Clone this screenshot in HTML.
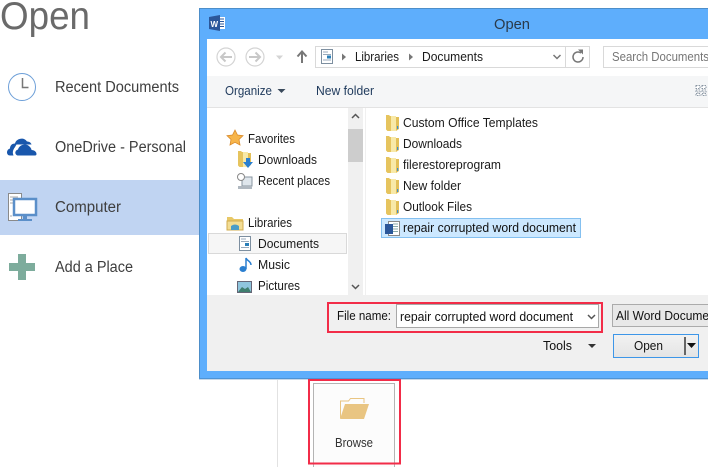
<!DOCTYPE html>
<html><head><meta charset="utf-8"><style>
html,body{margin:0;padding:0;background:#fff;width:708px;height:467px;overflow:hidden}
svg{display:block}
text{font-family:"Liberation Sans",sans-serif;font-size:12.5px;fill:#1a1a1a}
.m{font-size:15.500px;fill:#3e3e3e}
</style></head><body>
<svg width="708" height="467" viewBox="0 0 708 467" xmlns="http://www.w3.org/2000/svg">
<defs>
<g id="fld"><path d="M0 0h3l1 1h2v15H1.500L0 14.500z" fill="#e6c45e"/><path d="M5 1h5v15H5z" fill="#f8e9a8"/><path d="M10 2h3v12l-3 2z" fill="#e2bf58"/><path d="M11 11h1.200v3H11z" fill="#3f8fd0"/></g>
<linearGradient id="btn" x1="0" y1="0" x2="0" y2="1"><stop offset="0" stop-color="#f2f2f2"/><stop offset="1" stop-color="#e4e4e4"/></linearGradient>
</defs>

<!-- Backstage -->
<text x="0" y="29" style="font-size:39px;fill:#6a6a6a" textLength="90" lengthAdjust="spacingAndGlyphs">Open</text>
<rect x="0" y="180" width="199" height="55" fill="#c0d4f2"/>
<text class="m" x="55" y="92" textLength="124" lengthAdjust="spacingAndGlyphs">Recent Documents</text>
<text class="m" x="55" y="152" textLength="131" lengthAdjust="spacingAndGlyphs">OneDrive - Personal</text>
<text class="m" x="55" y="212" textLength="66" lengthAdjust="spacingAndGlyphs">Computer</text>
<text class="m" x="55" y="272" textLength="78" lengthAdjust="spacingAndGlyphs">Add a Place</text>
<!-- clock -->
<circle cx="22" cy="87" r="13.500" fill="#fff" stroke="#6d9fd8" stroke-width="1"/>
<path d="M22.500 78v9.500h6" fill="none" stroke="#777" stroke-width="1.500"/>
<!-- cloud -->
<path d="M10 155.500c-4 0-4-6 0-7 0-3 2-5 5-5 1-5 9-7 12-2 2 0 4 1 4.500 3h-15c-2 4-5 6-3 11z" fill="#1957ac"/>
<path d="M17.500 155.500c-3-1-3-5 .5-6 1-4.500 8-7 11.500-3 1.500 1.500 2 2.500 2 3.500 3 0 5 2 5 4 0 1-.5 1.500-1.500 1.500z" fill="#1957ac"/>
<!-- computer -->
<rect x="8.500" y="193.500" width="13" height="27" fill="#fff" stroke="#8a8a8a"/>
<path d="M10 197h8M10 200h10M10 203h6M10 216h2" stroke="#aaa"/>
<rect x="14" y="199" width="22" height="16" fill="#fff" stroke="#5b8fc9" stroke-width="2.500"/>
<path d="M23 216h4v3h-4zM18 219h14v2H18z" fill="#5b8fc9"/>
<!-- plus -->
<path d="M18 254h8v9h9v8h-9v9h-8v-9H9v-8h9z" fill="#7dac9c"/>

<!-- Dialog -->
<rect x="199" y="8" width="509" height="371" fill="#5eaefc"/>
<path d="M199.500 379V8.500H708" fill="none" stroke="#4d8ec9"/>
<rect x="199" y="378" width="509" height="1" fill="#4e94d6"/>
<rect x="199" y="379" width="509" height="1" fill="#c8d8e8"/>
<text x="494" y="29" style="font-size:15px;fill:#2a3a4a" textLength="36" lengthAdjust="spacingAndGlyphs">Open</text>
<!-- word icon -->
<rect x="216" y="17" width="9" height="12" fill="#fff"/>
<path d="M219 19h5M219 21.500h5M219 24h5M219 26.500h5" stroke="#2b579a"/>
<path d="M209 17l11-2v16l-11-2z" fill="#2b579a"/>
<text x="210.500" y="27" style="font-size:8px;font-weight:bold;fill:#fff">W</text>

<rect x="207" y="39" width="501" height="332" fill="#fff"/>
<rect x="207" y="76" width="501" height="31" fill="#f5f6f7"/>
<rect x="207" y="107" width="501" height="1" fill="#e3e3e3"/>

<!-- Nav -->
<circle cx="226" cy="57" r="9" fill="#fff" stroke="#d4d4d4" stroke-width="1.200"/>
<circle cx="255" cy="57" r="9" fill="#fff" stroke="#d4d4d4" stroke-width="1.200"/>
<path d="M232 57h-11M225.500 52.500L221 57l4.500 4.500" fill="none" stroke="#c8c8c8" stroke-width="2"/>
<path d="M249 57h11M255.500 52.500L260 57l-4.500 4.500" fill="none" stroke="#c8c8c8" stroke-width="2"/>
<path d="M276 55.500h7l-3.500 4z" fill="#d4d4d4"/>
<path d="M302 63V52M297.500 56.500L302 51.500l4.500 5" fill="none" stroke="#777" stroke-width="2"/>
<!-- Address -->
<rect x="315.500" y="46.500" width="274" height="21" fill="#fff" stroke="#d9d9d9"/>
<path d="M565.500 46v21" stroke="#d9d9d9"/>
<rect x="321.500" y="49.500" width="11" height="14" fill="#fff" stroke="#7d8fa0"/>
<path d="M323 52h5M323 54.500h8M323 60h8" stroke="#9ab"/>
<rect x="327" y="55.500" width="4" height="3" fill="#2a7fb8"/>
<path d="M342 53.500l4 3.500-4 3.500z" fill="#777"/>
<path d="M409 53.500l4 3.500-4 3.500z" fill="#777"/>
<text x="355" y="61" textLength="44" lengthAdjust="spacingAndGlyphs">Libraries</text>
<text x="422" y="61" textLength="61" lengthAdjust="spacingAndGlyphs">Documents</text>
<path d="M553.500 55l3.500 3.500 3.500-3.500" fill="none" stroke="#777" stroke-width="1.500"/>
<path d="M583 57a5 5 0 1 1-2-4" fill="none" stroke="#777" stroke-width="1.500"/><path d="M578 49.500h5v5z" fill="#777"/>
<rect x="603.500" y="46.500" width="110" height="21" fill="#fff" stroke="#d9d9d9"/>
<text x="612" y="61" style="fill:#777" textLength="97" lengthAdjust="spacingAndGlyphs">Search Documents</text>

<!-- Toolbar -->
<text x="225" y="95" style="fill:#1f3a5c" textLength="47" lengthAdjust="spacingAndGlyphs">Organize</text>
<path d="M277.500 89h8l-4 4z" fill="#3a4a5c"/>
<text x="316" y="95" style="fill:#1f3a5c" textLength="58" lengthAdjust="spacingAndGlyphs">New folder</text>
<path d="M696 85.500h4v3h-4zM696 90h4v2h-4zM696 93.500h4v2h-4zM702 85.500h4v3h-4zM702 90h4v2h-4zM702 93.500h4v2h-4z" fill="#fff" stroke="#6a7a8a" stroke-width=".8" stroke-dasharray="1.500 1"/>

<!-- Left pane -->
<rect x="348" y="108" width="15" height="187" fill="#f0f0f0"/>
<rect x="348" y="129" width="15" height="33" fill="#cdcdcd"/>
<path d="M352 118l3.500-3.500 3.500 3.500M352 285l3.500 3.500 3.500-3.500" fill="none" stroke="#555" stroke-width="1.500"/>
<rect x="365" y="108" width="1" height="187" fill="#f0f0f0"/>
<rect x="208.500" y="233.500" width="138" height="20" fill="#f6f6f6" stroke="#d9d9d9"/>
<text x="248" y="143" textLength="47" lengthAdjust="spacingAndGlyphs">Favorites</text>
<text x="258" y="164" textLength="59" lengthAdjust="spacingAndGlyphs">Downloads</text>
<text x="258" y="185" textLength="72" lengthAdjust="spacingAndGlyphs">Recent places</text>
<text x="248" y="227" textLength="44" lengthAdjust="spacingAndGlyphs">Libraries</text>
<text x="258" y="248" textLength="61" lengthAdjust="spacingAndGlyphs">Documents</text>
<text x="258" y="269" textLength="32" lengthAdjust="spacingAndGlyphs">Music</text>
<text x="258" y="290" textLength="42" lengthAdjust="spacingAndGlyphs">Pictures</text>
<!-- nav icons -->
<path d="M235 130l2.500 5 5.500.7-4 3.800 1 5.500-5-2.700-5 2.700 1-5.500-4-3.800 5.500-.7z" fill="#f7b54a" stroke="#d98a2a" stroke-width=".8"/>
<use href="#fld" x="238" y="151"/>
<path d="M246 158h4v4h3l-5 6-5-6h3z" fill="#2a7fd0"/>
<rect x="242" y="177" width="10" height="9" fill="#dfe6ec" stroke="#8a96a0"/>
<circle cx="241" cy="177" r="3.500" fill="#fff" stroke="#888"/>
<rect x="238" y="186" width="14" height="3" fill="#b0b8c0"/>
<path d="M227 217h5l2 2h9v3h-16z" fill="#e8c867"/>
<rect x="227" y="221" width="16" height="9" fill="#f3dd94" stroke="#d0ac50"/>
<path d="M231 230v-4q4-3 8 0v4z" fill="#4a9cc8"/>
<rect x="239.500" y="236.500" width="11" height="14" fill="#fff" stroke="#7d8fa0"/>
<path d="M241 239h5M241 241.500h8M241 247.500h8" stroke="#9ab"/>
<rect x="245" y="243" width="4" height="3" fill="#2a7fb8"/>
<ellipse cx="243" cy="269" rx="3.500" ry="3" fill="#2a7fd0"/>
<path d="M246 269v-11c1 3 5 3 5 7" fill="none" stroke="#2a7fd0" stroke-width="1.500"/>
<rect x="237.500" y="281.500" width="14" height="11" fill="#8fc5dd" stroke="#667"/>
<path d="M238 292l4-5 3 2 3-2 3 5z" fill="#3f7f6f"/>

<!-- Files -->
<rect x="381.500" y="218.500" width="199" height="19" fill="#cce8ff" stroke="#84c0f0"/>
<use href="#fld" x="386" y="115"/>
<use href="#fld" x="386" y="136"/>
<use href="#fld" x="386" y="157"/>
<use href="#fld" x="386" y="178"/>
<use href="#fld" x="386" y="199"/>
<rect x="388.500" y="221.500" width="11" height="14" fill="#fff" stroke="#888"/>
<path d="M393 224h5M393 226.500h5M393 229h5M393 231.500h5" stroke="#8aa"/>
<rect x="385" y="224" width="8" height="10" fill="#2b579a"/>
<text x="403" y="127" textLength="135" lengthAdjust="spacingAndGlyphs">Custom Office Templates</text>
<text x="403" y="148" textLength="59" lengthAdjust="spacingAndGlyphs">Downloads</text>
<text x="403" y="169" textLength="98" lengthAdjust="spacingAndGlyphs">filerestoreprogram</text>
<text x="403" y="190" textLength="58" lengthAdjust="spacingAndGlyphs">New folder</text>
<text x="403" y="211" textLength="69" lengthAdjust="spacingAndGlyphs">Outlook Files</text>
<text x="403" y="232" style="fill:#111" textLength="173" lengthAdjust="spacingAndGlyphs">repair corrupted word document</text>

<!-- Bottom panel -->
<rect x="207" y="295" width="501" height="76" fill="#f0f0f0"/>
<text x="337" y="320" style="fill:#111" textLength="54" lengthAdjust="spacingAndGlyphs">File name:</text>
<rect x="396.500" y="304.500" width="202" height="23" fill="#fff" stroke="#a8a8a8"/>
<text x="400" y="321" style="fill:#111" textLength="173" lengthAdjust="spacingAndGlyphs">repair corrupted word document</text>
<path d="M588 315l3.500 3.500 3.500-3.500" fill="none" stroke="#555" stroke-width="1.500"/>
<rect x="328" y="303" width="274" height="29" fill="none" stroke="#f22c48" stroke-width="2"/>
<rect x="612.500" y="304.500" width="110" height="22" fill="#e8e8e8" stroke="#ababab"/>
<text x="616" y="320" style="fill:#111" textLength="109" lengthAdjust="spacingAndGlyphs">All Word Documents</text>
<text x="543" y="350" style="fill:#111" textLength="29" lengthAdjust="spacingAndGlyphs">Tools</text>
<path d="M588 344h8l-4 4z" fill="#333"/>
<rect x="613.500" y="334.500" width="85" height="23" fill="url(#btn)" stroke="#3d96e8"/>
<text x="634" y="350" style="fill:#111" textLength="29" lengthAdjust="spacingAndGlyphs">Open</text>
<rect x="684" y="337" width="2" height="18" fill="#666"/>
<path d="M687 343h9l-4.500 5z" fill="#111"/>

<!-- Below dialog -->
<rect x="277" y="380" width="1" height="87" fill="#e2e2e2"/>
<rect x="313.500" y="383.500" width="81" height="90" fill="#fcfcfc" stroke="#b4b4b4"/>
<path d="M340.500 418V401h8l2-2.500h13.500V403" fill="none" stroke="#e9c582"/>
<path d="M345 404h24l-5 15h-24z" fill="#e9c582"/>
<text x="335" y="447" style="fill:#333" textLength="38" lengthAdjust="spacingAndGlyphs">Browse</text>
<rect x="309" y="380" width="91" height="83.500" fill="none" stroke="#f22c48" stroke-width="2"/>
</svg>
</body></html>
